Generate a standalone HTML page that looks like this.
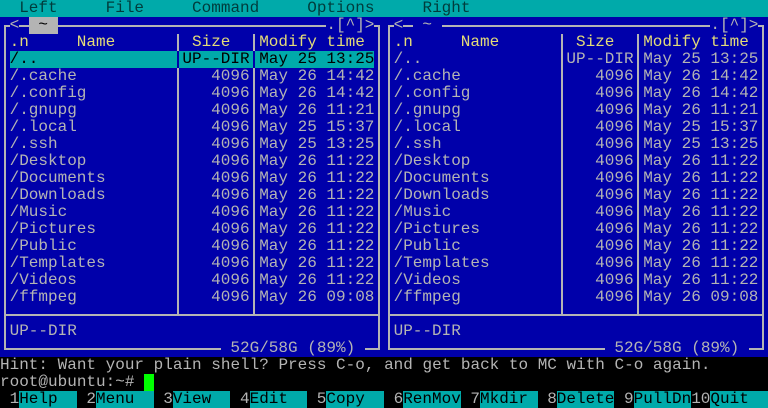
<!DOCTYPE html>
<html><head><meta charset="utf-8"><style>
*{margin:0;padding:0;box-sizing:border-box}
body{width:768px;height:408px;background:#000;overflow:hidden;position:relative;font-family:"Liberation Mono",monospace;font-size:16px;line-height:17px}
.bg{position:absolute}
.r{position:absolute;left:0;width:768px;height:17px;white-space:pre;color:#b4b4b4}
.r span{position:absolute;top:0;white-space:pre}
.ln{position:absolute;background:#b4b4b4}
.y{color:#e4dc78}
.n{left:9.6px}.s{left:182.4px;width:67.2px;text-align:right}.d{left:259.2px}
.N{left:393.6px}.S{left:566.4px;width:67.2px;text-align:right}.D{left:643.2px}
.b{background:#0000aa}
.k{background:#00aaaa;color:#000}
</style></head><body>
<div class="bg" style="left:0;top:0;width:768px;height:17px;background:#00aaaa"></div>
<div class="bg" style="left:0;top:17px;width:768px;height:340px;background:#0000aa"></div>
<div class="bg" style="left:9.6px;top:51px;width:364.8px;height:17px;background:#00aaaa"></div>

<!-- left panel lines -->
<div class="ln" style="left:4px;top:24.5px;width:376px;height:2px"></div>
<div class="ln" style="left:4px;top:347.5px;width:376px;height:2px"></div>
<div class="ln" style="left:4px;top:313.5px;width:376px;height:2px"></div>
<div class="ln" style="left:3.8px;top:24.5px;width:2px;height:325px"></div>
<div class="ln" style="left:378.2px;top:24.5px;width:2px;height:325px"></div>
<div class="ln" style="left:176.6px;top:34px;width:2px;height:280px"></div>
<div class="ln" style="left:253.4px;top:34px;width:2px;height:280px"></div>
<!-- right panel lines -->
<div class="ln" style="left:388px;top:24.5px;width:376px;height:2px"></div>
<div class="ln" style="left:388px;top:347.5px;width:376px;height:2px"></div>
<div class="ln" style="left:388px;top:313.5px;width:376px;height:2px"></div>
<div class="ln" style="left:387.8px;top:24.5px;width:2px;height:325px"></div>
<div class="ln" style="left:762.2px;top:24.5px;width:2px;height:325px"></div>
<div class="ln" style="left:560.6px;top:34px;width:2px;height:280px"></div>
<div class="ln" style="left:637.4px;top:34px;width:2px;height:280px"></div>

<div class="r" style="top:0;color:#003c3c">  Left     File     Command     Options     Right</div>
<div class="r" style="top:17px"><span class="b" style="left:9.6px">&lt;</span><span style="left:28.8px;background:#b4b4b4;color:#000"> ~ </span><span class="b" style="left:326.4px">.[^]&gt;</span><span class="b" style="left:393.6px">&lt;</span><span class="b" style="left:412.8px"> ~ </span><span class="b" style="left:710.4px">.[^]&gt;</span></div>
<div class="r y" style="top:34px"><span class="n b">.n     Name</span><span class="b" style="left:192px">Size</span><span class="d b">Modify time</span><span class="N b">.n     Name</span><span class="b" style="left:576px">Size</span><span class="D b">Modify time</span></div>
<div class="r" style="top:51px"><span class="n" style="color:#000">/..</span><span class="s" style="color:#000">UP--DIR</span><span class="d" style="color:#000">May 25 13:25</span><span class="N">/..</span><span class="S">UP--DIR</span><span class="D">May 25 13:25</span></div>
<div class="r" style="top:68px"><span class="n">/.cache</span><span class="s">4096</span><span class="d">May 26 14:42</span><span class="N">/.cache</span><span class="S">4096</span><span class="D">May 26 14:42</span></div>
<div class="r" style="top:85px"><span class="n">/.config</span><span class="s">4096</span><span class="d">May 26 14:42</span><span class="N">/.config</span><span class="S">4096</span><span class="D">May 26 14:42</span></div>
<div class="r" style="top:102px"><span class="n">/.gnupg</span><span class="s">4096</span><span class="d">May 26 11:21</span><span class="N">/.gnupg</span><span class="S">4096</span><span class="D">May 26 11:21</span></div>
<div class="r" style="top:119px"><span class="n">/.local</span><span class="s">4096</span><span class="d">May 25 15:37</span><span class="N">/.local</span><span class="S">4096</span><span class="D">May 25 15:37</span></div>
<div class="r" style="top:136px"><span class="n">/.ssh</span><span class="s">4096</span><span class="d">May 25 13:25</span><span class="N">/.ssh</span><span class="S">4096</span><span class="D">May 25 13:25</span></div>
<div class="r" style="top:153px"><span class="n">/Desktop</span><span class="s">4096</span><span class="d">May 26 11:22</span><span class="N">/Desktop</span><span class="S">4096</span><span class="D">May 26 11:22</span></div>
<div class="r" style="top:170px"><span class="n">/Documents</span><span class="s">4096</span><span class="d">May 26 11:22</span><span class="N">/Documents</span><span class="S">4096</span><span class="D">May 26 11:22</span></div>
<div class="r" style="top:187px"><span class="n">/Downloads</span><span class="s">4096</span><span class="d">May 26 11:22</span><span class="N">/Downloads</span><span class="S">4096</span><span class="D">May 26 11:22</span></div>
<div class="r" style="top:204px"><span class="n">/Music</span><span class="s">4096</span><span class="d">May 26 11:22</span><span class="N">/Music</span><span class="S">4096</span><span class="D">May 26 11:22</span></div>
<div class="r" style="top:221px"><span class="n">/Pictures</span><span class="s">4096</span><span class="d">May 26 11:22</span><span class="N">/Pictures</span><span class="S">4096</span><span class="D">May 26 11:22</span></div>
<div class="r" style="top:238px"><span class="n">/Public</span><span class="s">4096</span><span class="d">May 26 11:22</span><span class="N">/Public</span><span class="S">4096</span><span class="D">May 26 11:22</span></div>
<div class="r" style="top:255px"><span class="n">/Templates</span><span class="s">4096</span><span class="d">May 26 11:22</span><span class="N">/Templates</span><span class="S">4096</span><span class="D">May 26 11:22</span></div>
<div class="r" style="top:272px"><span class="n">/Videos</span><span class="s">4096</span><span class="d">May 26 11:22</span><span class="N">/Videos</span><span class="S">4096</span><span class="D">May 26 11:22</span></div>
<div class="r" style="top:289px"><span class="n">/ffmpeg</span><span class="s">4096</span><span class="d">May 26 09:08</span><span class="N">/ffmpeg</span><span class="S">4096</span><span class="D">May 26 09:08</span></div>
<div class="r" style="top:323px"><span class="n">UP--DIR</span><span class="N">UP--DIR</span></div>
<div class="r" style="top:340px"><span class="b" style="left:220.8px"> 52G/58G (89%) </span><span class="b" style="left:604.8px"> 52G/58G (89%) </span></div>
<div class="r" style="top:357px">Hint: Want your plain shell? Press C-o, and get back to MC with C-o again.</div>
<div class="r" style="top:374px">root@ubuntu:~# <span style="left:144px;width:9.6px;height:17px;background:#00ff00"></span></div>
<div class="r" style="top:391px"><span style="left:9.6px">1</span><span class="k" style="left:19.2px;width:57.6px">Help</span><span style="left:86.4px">2</span><span class="k" style="left:96px;width:57.6px">Menu</span><span style="left:163.2px">3</span><span class="k" style="left:172.8px;width:57.6px">View</span><span style="left:240px">4</span><span class="k" style="left:249.6px;width:57.6px">Edit</span><span style="left:316.8px">5</span><span class="k" style="left:326.4px;width:57.6px">Copy</span><span style="left:393.6px">6</span><span class="k" style="left:403.2px;width:57.6px">RenMov</span><span style="left:470.4px">7</span><span class="k" style="left:480px;width:57.6px">Mkdir</span><span style="left:547.2px">8</span><span class="k" style="left:556.8px;width:57.6px">Delete</span><span style="left:624px">9</span><span class="k" style="left:633.6px;width:57.6px">PullDn</span><span style="left:691.2px">10</span><span class="k" style="left:710.4px;width:57.6px">Quit</span></div>
<!-- dark separators on selected row -->
<div class="bg" style="left:176.6px;top:51px;width:2px;height:17px;background:#0000aa"></div>
<div class="bg" style="left:253.4px;top:51px;width:2px;height:17px;background:#0000aa"></div>
</body></html>
